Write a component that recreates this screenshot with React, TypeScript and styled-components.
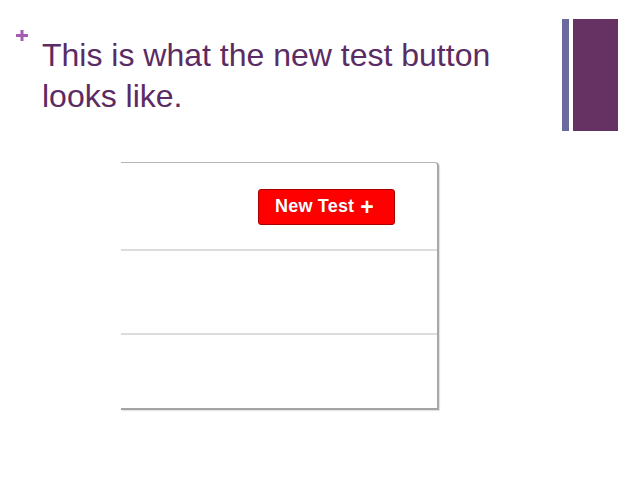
import * as React from 'react';
import styled, { createGlobalStyle } from 'styled-components';

const GlobalStyle = createGlobalStyle`
	html, body {
		margin: 0;
		padding: 0;
		background: #ffffff;
	}
	body {
		font-family: 'Liberation Sans', Arial, sans-serif;
	}
`;

const Slide = styled.div({
	width: '638px',
	height: '478px',
	background: '#ffffff',
	display: 'flex',
	flexDirection: 'column',
	overflow: 'hidden'
});

const Header = styled.header({
	display: 'flex',
	justifyContent: 'space-between',
	alignItems: 'flex-start',
	paddingTop: '19px',
	paddingLeft: '16px',
	paddingRight: '20px'
});

const TitleBlock = styled.div({
	display: 'flex',
	alignItems: 'flex-start'
});

const Bullet = styled.svg({
	width: '12px',
	height: '11px',
	marginTop: '11px',
	marginRight: '14px',
	flexShrink: 0
});

const Title = styled.h1({
	margin: '16px 0 0 0',
	color: '#5b2c63',
	fontFamily: "'Liberation Sans', Arial, sans-serif",
	fontSize: '32px',
	fontWeight: 400,
	lineHeight: '41px',
	width: '480px'
});

const Bars = styled.div({
	display: 'flex',
	gap: '4px'
});

const Bar = styled.div<{ $width: number; $color: string }>(({ $width, $color }) => ({
	width: `${$width}px`,
	height: '112px',
	background: $color
}));

const Body = styled.main({
	display: 'flex',
	paddingLeft: '121px',
	paddingTop: '31px'
});

const Panel = styled.div({
	width: '316px',
	display: 'flex',
	flexDirection: 'column',
	borderTop: '1px solid #b4b4b4',
	borderRight: '2px solid #a8a8a8',
	borderBottom: '2px solid #a4a4a4',
	borderTopRightRadius: '4px',
	boxShadow: '1px 1px 1px rgba(0, 0, 0, 0.12)'
});

const Row = styled.div<{ $height: number }>(({ $height }) => ({
	height: `${$height}px`,
	display: 'flex',
	alignItems: 'flex-start',
	justifyContent: 'flex-end',
	borderBottom: '2px solid #dcdcdc',
	'&:last-child': {
		borderBottom: 'none'
	}
}));

const NewTestButton = styled.button({
	marginTop: '26px',
	marginRight: '42px',
	width: '137px',
	height: '36px',
	background: '#ff0000',
	border: '1px solid #a80000',
	borderRadius: '3px',
	color: '#ffffff',
	fontFamily: "'Liberation Sans', Arial, sans-serif",
	fontSize: '18px',
	fontWeight: 700,
	letterSpacing: '0.2px',
	textShadow: '0 0 1px rgba(120, 0, 0, 0.6)',
	display: 'flex',
	alignItems: 'center',
	justifyContent: 'flex-start',
	gap: '6px',
	padding: '0 0 1px 16px',
	cursor: 'pointer'
});

const Plus = styled.span({
	fontSize: '23px',
	fontWeight: 700,
	lineHeight: '18px'
});

export default function App() {
	return (
		<>
			<GlobalStyle />
			<Slide>
				<Header>
					<TitleBlock>
						<Bullet viewBox="0 0 12 11">
							<rect x="0" y="4" width="12" height="3" fill="#a55cb3" />
							<rect x="4.5" y="0" width="3" height="11" fill="#a55cb3" />
						</Bullet>
						<Title>This is what the new test button looks like.</Title>
					</TitleBlock>
					<Bars>
						<Bar $width={7} $color="#6b6a9f" />
						<Bar $width={45} $color="#653263" />
					</Bars>
				</Header>
				<Body>
					<Panel>
						<Row $height={86}>
							<NewTestButton>
								New Test <Plus>+</Plus>
							</NewTestButton>
						</Row>
						<Row $height={82} />
						<Row $height={73} />
					</Panel>
				</Body>
			</Slide>
		</>
	);
}
